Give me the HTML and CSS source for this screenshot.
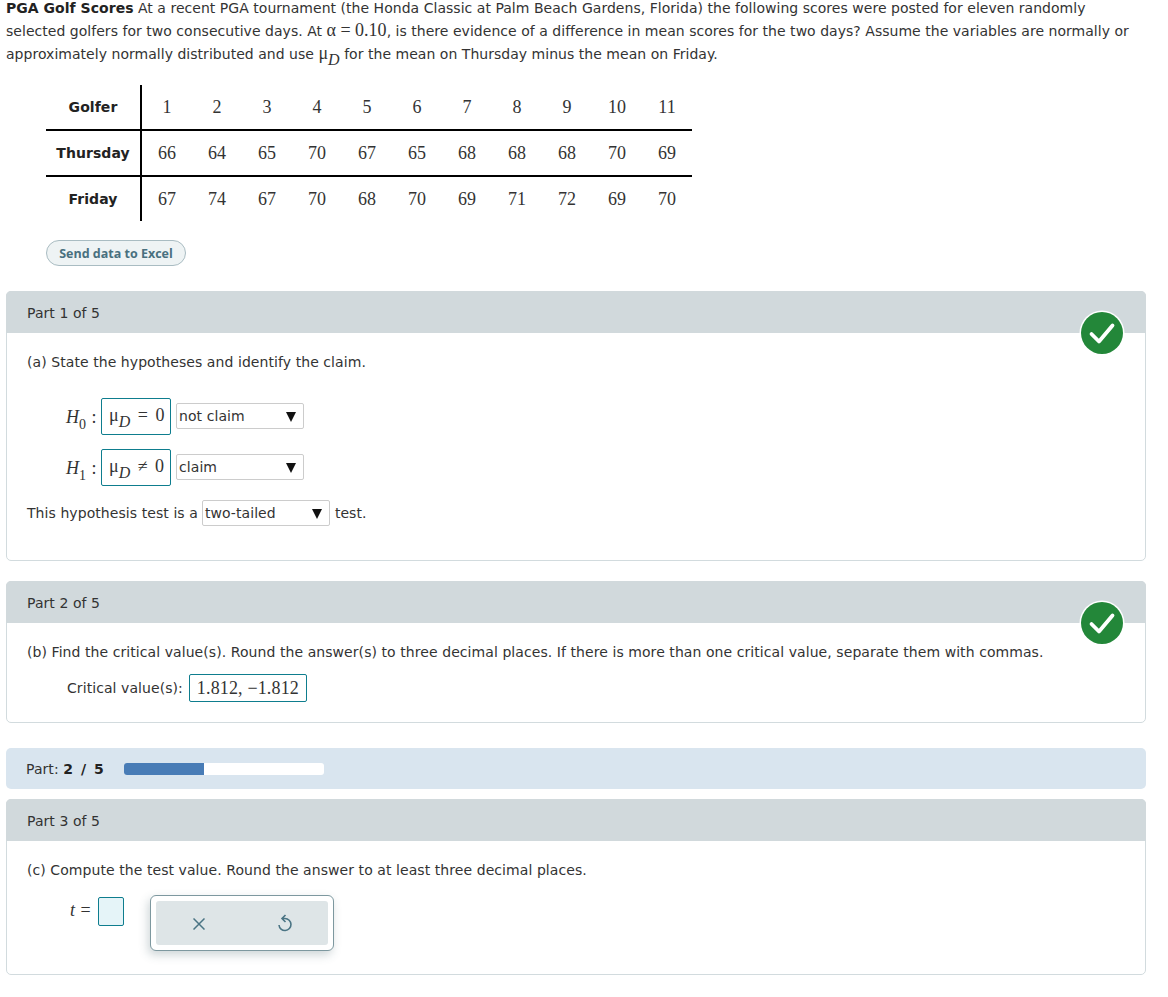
FILE: index.html
```html
<!DOCTYPE html>
<html lang="en">
<head>
    <meta charset="UTF-8">
    <meta name="viewport" content="width=device-width, initial-scale=1.0">
    <title>PGA Golf Scores</title>
    <link rel="stylesheet" href="styles.css">
</head>
<body>
    <div class="question">
        <p class="intro"><b>PGA Golf Scores</b> At a recent PGA tournament (the Honda Classic at Palm Beach Gardens, Florida) the following scores were posted for eleven randomly selected golfers for two consecutive days. At <span class="math">α = 0.10</span>, is there evidence of a difference in mean scores for the two days? Assume the variables are normally or approximately normally distributed and use <span class="math">μ<sub>D</sub></span> for the mean on Thursday minus the mean on Friday.</p>

        <table class="scores">
            <tr>
                <th>Golfer</th>
                <td>1</td><td>2</td><td>3</td><td>4</td><td>5</td><td>6</td><td>7</td><td>8</td><td>9</td><td>10</td><td>11</td>
            </tr>
            <tr>
                <th>Thursday</th>
                <td>66</td><td>64</td><td>65</td><td>70</td><td>67</td><td>65</td><td>68</td><td>68</td><td>68</td><td>70</td><td>69</td>
            </tr>
            <tr>
                <th>Friday</th>
                <td>67</td><td>74</td><td>67</td><td>70</td><td>68</td><td>70</td><td>69</td><td>71</td><td>72</td><td>69</td><td>70</td>
            </tr>
        </table>

        <button type="button" class="excel-btn">Send data to Excel</button>

        <section class="part part-one">
            <div class="part-head">Part 1 of 5</div>
            <svg class="check" viewBox="0 0 46 46"><circle cx="23" cy="23" r="22.5" fill="#fff"/><circle cx="23" cy="23" r="21" fill="#238739"/><path d="M12.5 24l7.500 7.500L33.500 15.500" fill="none" stroke="#fff" stroke-width="3.800" stroke-linecap="round" stroke-linejoin="round"/></svg>
            <div class="part-body">
                <p class="prompt">(a) State the hypotheses and identify the claim.</p>
                <div class="hyp-row hyp-first">
                    <span class="math hyp-label"><i>H</i><sub>0</sub> :</span>
                    <span class="answer math">μ<sub>D</sub> <span class="op">=</span> 0</span>
                    <span class="select">not claim</span>
                </div>
                <div class="hyp-row">
                    <span class="math hyp-label"><i>H</i><sub>1</sub> :</span>
                    <span class="answer math">μ<sub>D</sub> <span class="op">≠</span> 0</span>
                    <span class="select">claim</span>
                </div>
                <div class="test-row">
                    This hypothesis test is a
                    <span class="select">two-tailed</span>
                    test.
                </div>
            </div>
        </section>

        <section class="part part-two">
            <div class="part-head">Part 2 of 5</div>
            <svg class="check" viewBox="0 0 46 46"><circle cx="23" cy="23" r="22.5" fill="#fff"/><circle cx="23" cy="23" r="21" fill="#238739"/><path d="M12.5 24l7.500 7.500L33.500 15.500" fill="none" stroke="#fff" stroke-width="3.800" stroke-linecap="round" stroke-linejoin="round"/></svg>
            <div class="part-body">
                <p class="prompt">(b) Find the critical value(s). Round the answer(s) to three decimal places. If there is more than one critical value, separate them with commas.</p>
                <div class="critical-row">
                    Critical value(s):
                    <span class="answer math">1.812, −1.812</span>
                </div>
            </div>
        </section>

        <div class="progress">
            <span class="progress-label">Part: <b>2 / 5</b></span>
            <div class="track"><div class="fill"></div></div>
        </div>

        <section class="part part-three">
            <div class="part-head">Part 3 of 5</div>
            <div class="part-body">
                <p class="prompt">(c) Compute the test value. Round the answer to at least three decimal places.</p>
                <div class="t-row">
                    <span class="math t-label"><i>t</i> =</span>
                    <span class="empty-input"></span>
                    <div class="toolbox">
                        <div class="tools">
                            <svg class="icon-x" viewBox="0 0 12 12"><path d="M.5.5l11 11M11.500.5l-11 11" fill="none" stroke="#4a7484" stroke-width="1.500"/></svg>
                            <svg class="icon-undo" viewBox="0 0 14 18"><path d="M4 4.500h3a6 6 0 1 1-6 6.500M7.500 1L4 4.500 7.500 8" fill="none" stroke="#4a7484" stroke-width="1.600"/></svg>
                        </div>
                    </div>
                </div>
            </div>
        </section>
    </div>
</body>
</html>
```

FILE: styles.css
```css
body {
    font-family: "DejaVu Sans", Verdana, sans-serif;
    font-size: 14px;
    letter-spacing: 0.07px;
    color: #333;
    margin: 0;
    padding: 0;
    background-color: #fff;
}
.question {
    width: 1140px;
    padding: 0 0 0 6px;
}
.intro {
    margin: -3px 0 0;
    line-height: 23px;
    letter-spacing: 0.03px;
    width: 1140px;
}
.intro b {
    color: #222;
}
.math {
    font-family: "Liberation Serif", "Times New Roman", serif;
    font-size: 18px;
    letter-spacing: 0;
    line-height: 1;
}
.math sub {
    font-size: 16px;
    font-style: italic;
    line-height: 0;
    vertical-align: -6px;
}
.hyp-label sub {
    font-size: 14px;
    font-style: normal;
    margin-right: 1px;
}
.op {
    margin: 0 3px;
}
.scores {
    border-collapse: collapse;
    margin: 19px 0 0 40px;
}
.scores th {
    width: 94px;
    height: 44px;
    padding: 0;
    color: #222;
    font-size: 14px;
    font-weight: bold;
    border-right: 2px solid #000;
}
.scores td {
    width: 50px;
    height: 44px;
    padding: 0;
    text-align: center;
    font-family: "Liberation Serif", "Times New Roman", serif;
    font-size: 18px;
    letter-spacing: 0;
}
.scores tr + tr th,
.scores tr + tr td {
    border-top: 2px solid #000;
}
.excel-btn {
    display: block;
    margin: 19px 0 0 40px;
    width: 140px;
    height: 26px;
    padding: 0;
    font-family: "Open Sans", Verdana, sans-serif;
    font-size: 12.5px;
    font-weight: 700;
    color: #49707f;
    background-color: #eef3f4;
    border: 1px solid #a9bcc2;
    border-radius: 13px;
}
.part {
    position: relative;
    border: 1px solid #d2dbde;
    border-radius: 5px;
    box-sizing: border-box;
    width: 1140px;
}
.part-one {
    height: 270px;
    margin-top: 25px;
}
.part-two {
    height: 142px;
    margin-top: 20px;
}
.part-three {
    height: 176px;
    margin-top: 10px;
}
.part-head {
    height: 42px;
    margin: -1px -1px 0;
    padding-left: 21px;
    line-height: 45px;
    background-color: #d1d9dc;
    border-radius: 5px 5px 0 0;
}
.part-body {
    padding: 0 20px;
}
.prompt {
    margin: 0;
    padding-top: 20px;
    line-height: 18px;
}
.check {
    position: absolute;
    top: 18px;
    right: 20px;
    width: 46px;
    height: 46px;
}
.hyp-row {
    display: flex;
    align-items: center;
    height: 37px;
    margin-top: 14px;
    margin-left: 39px;
}
.hyp-first {
    margin-top: 27px;
}
.hyp-label {
    width: 35px;
    white-space: nowrap;
}
.answer {
    display: inline-block;
    box-sizing: border-box;
    height: 37px;
    padding: 0 7px;
    line-height: 33px;
    border: 1px solid #0e7d8e;
    border-radius: 2px;
    white-space: nowrap;
}
.hyp-row .answer {
    width: 70px;
}
.hyp-row .select {
    margin-top: -1px;
}
.select {
    position: relative;
    display: inline-block;
    box-sizing: border-box;
    width: 128px;
    height: 26px;
    margin-left: 5px;
    padding-left: 2px;
    line-height: 24px;
    border: 1px solid #ccc;
    border-radius: 2px;
}
.select::after {
    content: "";
    position: absolute;
    top: 8px;
    right: 7px;
    border-left: 5px solid transparent;
    border-right: 5px solid transparent;
    border-top: 10px solid #111;
}
.test-row {
    margin-top: 14px;
    display: flex;
    align-items: center;
    gap: 5px;
}
.test-row .select {
    margin-left: -1px;
}
.critical-row {
    display: flex;
    align-items: center;
    gap: 6px;
    margin: 13px 0 0 40px;
}
.critical-row .answer {
    height: 28px;
    line-height: 26px;
    letter-spacing: 0.15px;
}
.progress {
    display: flex;
    align-items: center;
    box-sizing: border-box;
    height: 41px;
    margin-top: 25px;
    padding-left: 20px;
    background-color: #d9e5ef;
    border-radius: 5px;
}
.progress-label {
    width: 98px;
    white-space: nowrap;
}
.progress b {
    color: #222;
    word-spacing: 3px;
}
.track {
    width: 200px;
    height: 12px;
    background-color: #fff;
    border-radius: 3px;
    overflow: hidden;
}
.fill {
    width: 40%;
    height: 100%;
    background-color: #487cb6;
}
.t-row {
    display: flex;
    align-items: flex-start;
    margin: 16px 0 0 43px;
}
.t-label {
    margin-top: 6px;
    width: 28px;
    white-space: nowrap;
    word-spacing: 1px;
}
.empty-input {
    box-sizing: border-box;
    width: 26px;
    height: 29px;
    margin-top: 2px;
    background-color: #e5f4f8;
    border: 1px solid #0e7d8e;
    border-radius: 2px;
}
.toolbox {
    box-sizing: border-box;
    width: 184px;
    height: 56px;
    margin-left: 26px;
    padding: 5px;
    background-color: #fff;
    border: 1px solid #7d989f;
    border-radius: 6px;
    box-shadow: -2px 4px 10px rgba(60, 90, 100, 0.25);
}
.tools {
    display: flex;
    align-items: center;
    justify-content: space-around;
    height: 44px;
    background-color: #dee5e7;
    border-radius: 3px;
}
.icon-x {
    width: 12px;
    height: 12px;
    margin-top: 1px;
}
.icon-undo {
    width: 14px;
    height: 18px;
}
```
